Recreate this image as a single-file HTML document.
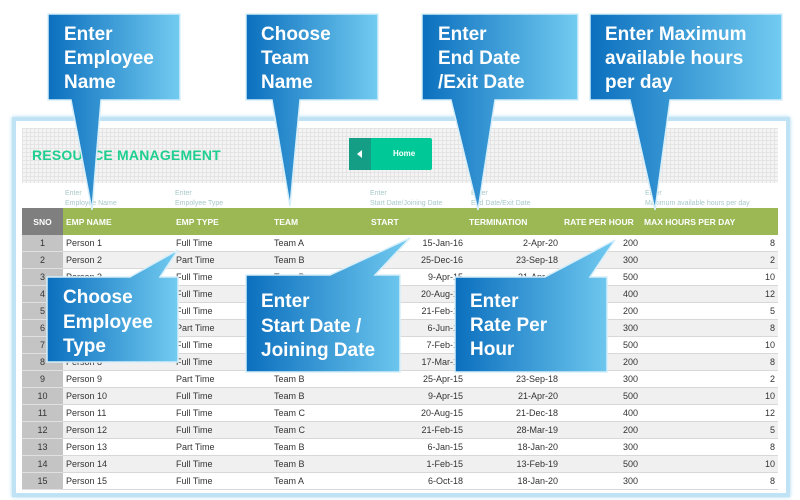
<!DOCTYPE html>
<html><head><meta charset="utf-8"><style>
body{margin:0;width:800px;height:500px;background:#fff;position:relative;overflow:hidden;font-family:"Liberation Sans",sans-serif}
.frame{position:absolute;left:12px;top:117px;width:770px;height:372px;border:4px solid #bfe3f5;background:#fff;box-shadow:0 0 4px #a8d8f0}
.grid{position:absolute;left:22px;top:128px;width:756px;height:55px;background-color:#f4f4f4;background-image:linear-gradient(#e4e4e4 1px,transparent 1px),linear-gradient(90deg,#e4e4e4 1px,transparent 1px);background-size:4px 4px}
.title{position:absolute;left:32px;top:147px;font-size:14px;font-weight:bold;color:#1fcf8f;letter-spacing:0.2px}
.btn{position:absolute;left:349px;top:138px;width:83px;height:32px;background:#00c896;border-radius:2px}
.btn .l{position:absolute;left:0;top:0;width:22px;height:32px;background:#149e86}
.btn .l:after{content:"";position:absolute;left:8px;top:12px;border-right:5px solid #fff;border-top:4px solid transparent;border-bottom:4px solid transparent}
.btn span{position:absolute;left:44px;top:11px;color:#fff;font-size:8px;font-weight:bold}
.hint{position:absolute;top:189px;font-size:7px;color:#a8c8c8;line-height:10px}
table{position:absolute;left:22px;top:208px;border-collapse:collapse;width:756px;font-size:9px;color:#333}
th{background:#9bb854;color:#fff;height:27px;text-align:left;font-size:8.5px;padding:0 0 0 3px}
th.s{background:#7f7f7f;text-align:center;padding:0}
td{height:16px;padding:0 0 0 3px;border-bottom:1px solid #d8d8d8;white-space:nowrap;background:#fff}
td.s{background:#c4c4c4;text-align:center;padding:0;border-bottom:1px solid #e0e0e0}
td.r{text-align:right;padding:0 3px 0 0}
tr:nth-child(odd) td{background:#f0f0f0}
tr:nth-child(odd) td.s{background:#c4c4c4}
svg{position:absolute;left:0;top:0}
svg text{font-family:"Liberation Sans",sans-serif;font-weight:bold;font-size:19px;fill:#fff}
</style></head><body>
<div class="frame"></div>
<div class="grid"></div>
<div class="title">RESOURCE MANAGEMENT</div>
<div class="btn"><div class="l"></div><span>Home</span></div>
<div class="hint" style="left:65px">Enter<br>Employee Name</div>
<div class="hint" style="left:175px">Enter<br>Empolyee Type</div>
<div class="hint" style="left:370px">Enter<br>Start Date/Joining Date</div>
<div class="hint" style="left:471px">Enter<br>End Date/Exit Date</div>
<div class="hint" style="left:645px">Enter<br>Maximum available hours per day</div>
<table>
<colgroup><col style="width:41px"><col style="width:110px"><col style="width:98px"><col style="width:97px"><col style="width:98px"><col style="width:95px"><col style="width:80px"><col style="width:137px"></colgroup>
<tr><th class="s">SNO</th><th>EMP NAME</th><th>EMP TYPE</th><th>TEAM</th><th>START</th><th>TERMINATION</th><th>RATE PER HOUR</th><th>MAX HOURS PER DAY</th></tr>
<tr><td class="s">1</td><td>Person 1</td><td>Full Time</td><td>Team A</td><td class="r">15-Jan-16</td><td class="r">2-Apr-20</td><td class="r">200</td><td class="r">8</td></tr>
<tr><td class="s">2</td><td>Person 2</td><td>Part Time</td><td>Team B</td><td class="r">25-Dec-16</td><td class="r">23-Sep-18</td><td class="r">300</td><td class="r">2</td></tr>
<tr><td class="s">3</td><td>Person 3</td><td>Full Time</td><td>Team B</td><td class="r">9-Apr-15</td><td class="r">21-Apr-20</td><td class="r">500</td><td class="r">10</td></tr>
<tr><td class="s">4</td><td>Person 4</td><td>Full Time</td><td>Team C</td><td class="r">20-Aug-15</td><td class="r">21-Dec-18</td><td class="r">400</td><td class="r">12</td></tr>
<tr><td class="s">5</td><td>Person 5</td><td>Full Time</td><td>Team C</td><td class="r">21-Feb-15</td><td class="r">28-Mar-19</td><td class="r">200</td><td class="r">5</td></tr>
<tr><td class="s">6</td><td>Person 6</td><td>Part Time</td><td>Team B</td><td class="r">6-Jun-15</td><td class="r">18-Jan-20</td><td class="r">300</td><td class="r">8</td></tr>
<tr><td class="s">7</td><td>Person 7</td><td>Full Time</td><td>Team B</td><td class="r">7-Feb-15</td><td class="r">13-Feb-19</td><td class="r">500</td><td class="r">10</td></tr>
<tr><td class="s">8</td><td>Person 8</td><td>Full Time</td><td>Team A</td><td class="r">17-Mar-16</td><td class="r">2-Apr-20</td><td class="r">200</td><td class="r">8</td></tr>
<tr><td class="s">9</td><td>Person 9</td><td>Part Time</td><td>Team B</td><td class="r">25-Apr-15</td><td class="r">23-Sep-18</td><td class="r">300</td><td class="r">2</td></tr>
<tr><td class="s">10</td><td>Person 10</td><td>Full Time</td><td>Team B</td><td class="r">9-Apr-15</td><td class="r">21-Apr-20</td><td class="r">500</td><td class="r">10</td></tr>
<tr><td class="s">11</td><td>Person 11</td><td>Full Time</td><td>Team C</td><td class="r">20-Aug-15</td><td class="r">21-Dec-18</td><td class="r">400</td><td class="r">12</td></tr>
<tr><td class="s">12</td><td>Person 12</td><td>Full Time</td><td>Team C</td><td class="r">21-Feb-15</td><td class="r">28-Mar-19</td><td class="r">200</td><td class="r">5</td></tr>
<tr><td class="s">13</td><td>Person 13</td><td>Part Time</td><td>Team B</td><td class="r">6-Jan-15</td><td class="r">18-Jan-20</td><td class="r">300</td><td class="r">8</td></tr>
<tr><td class="s">14</td><td>Person 14</td><td>Full Time</td><td>Team B</td><td class="r">1-Feb-15</td><td class="r">13-Feb-19</td><td class="r">500</td><td class="r">10</td></tr>
<tr><td class="s">15</td><td>Person 15</td><td>Full Time</td><td>Team A</td><td class="r">6-Oct-18</td><td class="r">18-Jan-20</td><td class="r">300</td><td class="r">8</td></tr>
</table>
<svg width="800" height="500">
<defs><linearGradient id="g" x1="0" x2="1" y1="0" y2="0"><stop offset="0" stop-color="#0b6fbe"/><stop offset="1" stop-color="#72cbf0"/></linearGradient></defs>
<g stroke="#d6eef9" stroke-width="1.5" fill="url(#g)">
<path d="M48 14H180V100H101L92 210L71 100H48Z"/>
<path d="M246 14H378V100H300L290 206L272 100H246Z"/>
<path d="M422 14H578V100H495L478 210L451 100H422Z"/>
<path d="M590 14H782V100H670L655 210L630 100H590Z"/>
<path d="M47 277H130L178 250L160 277H178V362H47Z"/>
<path d="M246 275H330L410 238L375 275H400V372H246Z"/>
<path d="M455 277H545L615 240L590 277H607V372H455Z"/>
</g>
<text x="64" y="40">Enter</text><text x="64" y="64">Employee</text><text x="64" y="88">Name</text>
<text x="261" y="40">Choose</text><text x="261" y="64">Team</text><text x="261" y="88">Name</text>
<text x="438" y="40">Enter</text><text x="438" y="64">End Date</text><text x="438" y="88">/Exit Date</text>
<text x="605" y="40">Enter Maximum</text><text x="605" y="64">available hours</text><text x="605" y="88">per day</text>
<text x="63" y="303">Choose</text><text x="63" y="328">Employee</text><text x="63" y="352">Type</text>
<text x="261" y="307">Enter</text><text x="261" y="332">Start Date /</text><text x="261" y="356">Joining Date</text>
<text x="470" y="307">Enter</text><text x="470" y="331">Rate Per</text><text x="470" y="355">Hour</text>
</svg>
</body></html>
